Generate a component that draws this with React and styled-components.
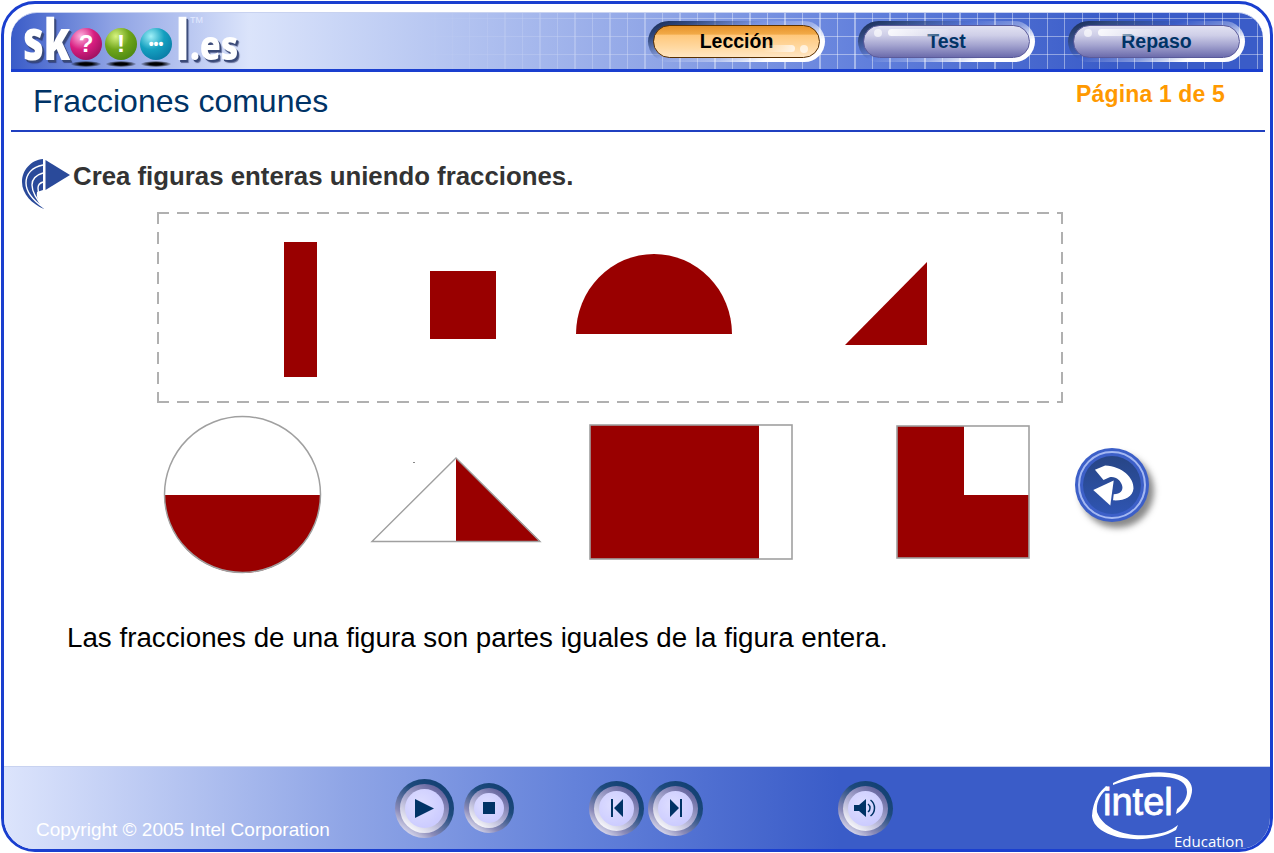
import React from 'react';
import styled, { createGlobalStyle } from 'styled-components';

const GlobalStyle = createGlobalStyle`
  html, body {
    margin: 0;
    padding: 0;
    background: #fff;
    font-family: 'Liberation Sans', Arial, sans-serif;
  }
`;

const Frame = styled.div`
  box-sizing: border-box;
  width: 1272px;
  height: 851px;
  margin: 1px;
  border: 3px solid #1a3fcf;
  border-radius: 34px;
  background: #fff;
  overflow: hidden;
  display: flex;
  flex-direction: column;
`;

const Header = styled.header`
  position: relative;
  flex: none;
  box-sizing: border-box;
  height: 60px;
  margin: 8px 7px 0 7px;
  border-top: 1px solid #c8d2f0;
  border-bottom: 3px solid #1a3fcf;
  border-radius: 26px 26px 0 0;
  background: linear-gradient(90deg, #3a5cc8 0%, #8ea2e4 8%, #dbe4fb 19%, #c0cef4 30%, #8ea4e6 52%, #6280dc 68%, #3a5cc8 88%, #3a5cc8 100%);
  display: flex;
  align-items: flex-start;

  &::before {
    content: '';
    position: absolute;
    left: 406px;
    right: 0;
    top: 0;
    bottom: 0;
    border-top-right-radius: 26px;
    background-image:
      repeating-linear-gradient(90deg, rgba(255, 255, 255, 0.42) 0 1px, transparent 1px 17.5px),
      repeating-linear-gradient(180deg, transparent 0 5px, rgba(255, 255, 255, 0.42) 5px 6px, transparent 6px 18px);
    mask-image: linear-gradient(90deg, transparent 0%, #000 40%);
  }
`;

const Logo = styled.div`
  position: relative;
  display: flex;
  align-items: flex-start;
  margin: 5px 0 0 12px;
  height: 52px;
`;

const LogoWord = styled.span`
  flex: none;
  display: block;
  width: ${(p) => p.$width}px;
  margin: ${(p) => p.$margin || '0'};
  font-family: 'Open Sans', 'Liberation Sans', sans-serif;
  font-weight: 800;
  font-size: ${(p) => p.$size}px;
  line-height: ${(p) => p.$line}px;
  color: #fff;
  transform: scaleX(${(p) => p.$squeeze});
  transform-origin: left center;
  text-shadow: 2px 2px 0 #3a4a78, 3px 3px 1px rgba(30, 40, 90, 0.6);
`;

const Ball = styled.span`
  position: relative;
  flex: none;
  width: 32px;
  height: 32px;
  margin: 10px 3px 0 0;
  border-radius: 50%;
  background: radial-gradient(circle at 34% 26%, ${(p) => p.$light} 0%, ${(p) => p.$mid} 42%, ${(p) => p.$dark} 78%, ${(p) => p.$rim} 100%);
  color: #fff;
  font: bold ${(p) => p.$font}px/32px 'Liberation Sans', sans-serif;
  text-align: center;

  &::after {
    content: '';
    position: absolute;
    left: 1px;
    right: 1px;
    top: 33px;
    height: 6px;
    border-radius: 50%;
    background: radial-gradient(ellipse, #000 30%, rgba(0, 0, 0, 0) 75%);
  }
`;

const Trademark = styled.span`
  position: absolute;
  left: 167px;
  top: -3px;
  font-size: 9px;
  color: #e4eaff;
`;

const Nav = styled.nav`
  position: relative;
  display: flex;
  margin: 8px 18px 0 auto;
  gap: 33px;
`;

const TabRing = styled.div`
  box-sizing: border-box;
  width: 177px;
  height: 41px;
  padding: 4px 5px;
  border-radius: 21px;
  background: linear-gradient(160deg, #14264f 0%, #31497f 16%, rgba(90, 120, 200, 0) 40%, rgba(255, 255, 255, 0.35) 60%, #fff 78%);
`;

const Tab = styled.button`
  position: relative;
  display: block;
  box-sizing: border-box;
  width: 100%;
  height: 33px;
  padding: 0 0 2px;
  border: 1px solid ${(p) => (p.$active ? '#5a3000' : '#5a5a9a')};
  border-radius: 17px;
  overflow: hidden;
  font: bold 19.5px/28px 'Liberation Sans', sans-serif;
  color: ${(p) => (p.$active ? '#000' : '#003366')};
  background: ${(p) =>
    p.$active
      ? 'linear-gradient(180deg, #e6922a 0%, #f2aa48 26%, #ffc87c 30%, #ffd9a2 70%, #ffe6c4 100%)'
      : 'linear-gradient(180deg, #e2e2f2 0%, #cfcfe8 30%, #a4a4d0 62%, #6c6cac 100%)'};

  &::before {
    content: '';
    position: absolute;
    width: 8px;
    height: 8px;
    border-radius: 50%;
    background: rgba(255, 255, 255, 0.65);
    ${(p) => (p.$active ? 'right: 11px; bottom: 4px;' : 'left: 10px; top: 3px;')}
  }

  &::after {
    content: '';
    position: absolute;
    height: 7px;
    border-radius: 4px;
    ${(p) =>
      p.$active
        ? 'right: 24px; bottom: 5px; width: 32px; background: linear-gradient(90deg, rgba(255,255,255,0), rgba(255,255,255,.75));'
        : 'left: 24px; top: 3px; width: 62px; background: linear-gradient(90deg, rgba(255,255,255,.85), rgba(255,255,255,.1));'}
  }
`;

const TitleRow = styled.div`
  flex: none;
  box-sizing: border-box;
  height: 60px;
  margin: 0 5px 0 7px;
  padding: 0 40px 0 22px;
  border-bottom: 2px solid #2040c0;
  display: flex;
  justify-content: space-between;
  align-items: flex-start;
`;

const Title = styled.h1`
  margin: 9px 0 0;
  font-size: 32px;
  line-height: 40px;
  font-weight: 400;
  color: #003366;
`;

const PageCount = styled.div`
  margin-top: 7px;
  font-size: 23px;
  line-height: 30px;
  letter-spacing: 0.15px;
  font-weight: 700;
  color: #ff9900;
`;

const Main = styled.main`
  flex: 1;
  display: flex;
  flex-direction: column;
`;

const Prompt = styled.div`
  display: flex;
  align-items: flex-start;
  gap: 1px;
  height: 52px;
  margin: 26px 0 0 18px;
`;

const PromptText = styled.h2`
  margin: 3px 0 0;
  font-size: 25.8px;
  line-height: 30px;
  font-weight: 700;
  color: #333;
`;

const Tray = styled.div`
  box-sizing: border-box;
  display: flex;
  align-items: flex-start;
  width: 906px;
  height: 191px;
  margin: 2px 0 0 153px;
  border: 2px solid transparent;
  background:
    repeating-linear-gradient(90deg, #b0b0b0 0 12px, transparent 12px 20px) top left / 100% 2px no-repeat border-box,
    repeating-linear-gradient(90deg, #b0b0b0 0 12px, transparent 12px 20px) bottom left / 100% 2px no-repeat border-box,
    repeating-linear-gradient(180deg, #b0b0b0 0 12px, transparent 12px 20px) top left / 2px 100% no-repeat border-box,
    repeating-linear-gradient(180deg, #b0b0b0 0 12px, transparent 12px 20px) top right / 2px 100% no-repeat border-box;
`;

const Targets = styled.div`
  display: flex;
  align-items: flex-start;
  margin-left: 159px;
`;

const Piece = styled.svg`
  flex: none;
  display: block;
  margin: ${(p) => p.$top}px 0 0 ${(p) => p.$left}px;
`;

const ReturnButton = styled.div`
  flex: none;
  margin: 45px 0 0 45px;
  width: 74px;
  height: 74px;
  border-radius: 50%;
  box-shadow: 5px 6px 6px rgba(40, 40, 40, 0.55);
  background: #3c5fc8;
  box-sizing: border-box;
  padding: 3px;
`;

const ReturnRing = styled.div`
  box-sizing: border-box;
  width: 100%;
  height: 100%;
  border-radius: 50%;
  border: 2px solid #a4b8f2;
  padding: 3px;
  background: #3c5fc8;
`;

const ReturnFace = styled.div`
  width: 100%;
  height: 100%;
  border-radius: 50%;
  background: linear-gradient(180deg, #274585, #2f55b2);

  svg {
    display: block;
  }
`;

const Explanation = styled.p`
  margin: 49px 0 0 63px;
  font-size: 27.75px;
  line-height: 30px;
  color: #000;
`;

const Footer = styled.footer`
  flex: none;
  height: 83px;
  box-sizing: border-box;
  border-top: 1px solid #c8d2f0;
  background: linear-gradient(90deg, #dce4fc 0%, #8fa5e6 27%, #6482da 45%, #3a5cc8 66%, #3a5cc8 100%);
  display: flex;
  align-items: center;
`;

const Copyright = styled.div`
  align-self: flex-end;
  width: 293px;
  margin: 0 0 7px 32px;
  font-size: 19px;
  line-height: 24px;
  color: #fff;
  white-space: nowrap;
`;

const Media = styled.div`
  flex: none;
  box-sizing: border-box;
  width: ${(p) => p.$size}px;
  height: ${(p) => p.$size}px;
  margin-left: ${(p) => p.$left}px;
  padding: 5px;
  border-radius: 50%;
  background: linear-gradient(35deg, #f0f0fc 8%, #8a8ab8 30%, #1d4a7c 62%, #0d3b6e 100%);
`;

const MediaRim = styled.div`
  box-sizing: border-box;
  width: 100%;
  height: 100%;
  padding: 5px;
  border-radius: 50%;
  background: linear-gradient(215deg, #5c5c98 10%, #b0b0d4 55%, #fff 90%);
`;

const MediaFace = styled.div`
  width: 100%;
  height: 100%;
  border-radius: 50%;
  background: radial-gradient(circle at 40% 40%, #dedeff, #ccccff 70%);
  display: flex;
  align-items: center;
  justify-content: center;
`;

const Intel = styled.div`
  position: relative;
  flex: none;
  align-self: flex-start;
  width: 152px;
  height: 79px;
  margin: 4px 27px 0 auto;
`;

const IntelWord = styled.div`
  position: absolute;
  left: 12px;
  top: 11px;
  font-size: 38px;
  line-height: 40px;
  color: #fff;
  -webkit-text-stroke: 0.8px #fff;
`;

const IntelSwoosh = styled.svg`
  position: absolute;
  left: 0;
  top: 0;
`;

const IntelTag = styled.div`
  position: absolute;
  left: 83px;
  bottom: 0;
  font-family: 'Open Sans', sans-serif;
  font-size: 15px;
  line-height: 18px;
  color: #fff;
`;

function MediaButton({ size, left, children }) {
  return (
    <Media $size={size} $left={left}>
      <MediaRim>
        <MediaFace>{children}</MediaFace>
      </MediaRim>
    </Media>
  );
}

const RED = '#990000';
const EDGE = '#a0a0a0';

export default function App() {
  return (
    <>
      <GlobalStyle />
      <Frame>
        <Header>
          <Logo>
            <LogoWord $size={56} $line={48} $width={47} $squeeze={0.72} $margin="-4px 0 0 0">sk</LogoWord>
            <Ball $font={24} $light="#ffb4e0" $mid="#d81e80" $dark="#a01262" $rim="#ff40a8">?</Ball>
            <Ball $font={24} $light="#d8f480" $mid="#6fa51a" $dark="#4f8a12" $rim="#a8e020">!</Ball>
            <Ball $font={14} $light="#a0f0f8" $mid="#14a0c0" $dark="#0a7ea8" $rim="#20e0f0">•••</Ball>
            <LogoWord $size={56} $line={48} $width={14} $squeeze={0.72} $margin="-4px 0 0 1px">l</LogoWord>
            <LogoWord $size={41} $line={26} $width={48} $squeeze={0.83} $margin="13px 0 0 0">.es</LogoWord>
            <Trademark>TM</Trademark>
          </Logo>
          <Nav>
            <TabRing><Tab $active>Lección</Tab></TabRing>
            <TabRing><Tab>Test</Tab></TabRing>
            <TabRing><Tab>Repaso</Tab></TabRing>
          </Nav>
        </Header>

        <TitleRow>
          <Title>Fracciones comunes</Title>
          <PageCount>Página 1 de 5</PageCount>
        </TitleRow>

        <Main>
          <Prompt>
            <svg width="50" height="52" viewBox="0 0 50 52">
              <path d="M21 1C9 2 0 12 0 24c0 12 10 22 22 27-5-7-8-11-7-17l6-2z" fill="#2a4a9a" />
              <path d="M21 7C10 9 4 16 4 25c0 10 8 18 18 25M21 15c-7 2-11 6-11 12 0 8 5 15 12 23M21 24c-3 1-5 3-5 6 0 6 2 11 6 19" fill="none" stroke="#fff" strokeWidth="1.4" />
              <path d="M23.5 2L48 17 23.5 32z" fill="#2a4a9a" />
            </svg>
            <PromptText>Crea figuras enteras uniendo fracciones.</PromptText>
          </Prompt>

          <Tray>
            <Piece $left={125} $top={28} width="33" height="135" viewBox="0 0 33 135">
              <rect width="33" height="135" fill={RED} />
            </Piece>
            <Piece $left={113} $top={57} width="66" height="68" viewBox="0 0 66 68">
              <rect width="66" height="68" fill={RED} />
            </Piece>
            <Piece $left={80} $top={40} width="156" height="80" viewBox="0 0 156 80">
              <path d="M0 80A78 80 0 0 1 156 80z" fill={RED} />
            </Piece>
            <Piece $left={113} $top={48} width="82" height="83" viewBox="0 0 82 83">
              <path d="M82 0V83H0z" fill={RED} />
            </Piece>
          </Tray>

          <Targets>
            <Piece $left={0} $top={12} width="159" height="159" viewBox="0 0 159 159">
              <path d="M1.5 80h156a78 78 0 0 1-156 0z" fill={RED} />
              <circle cx="79.5" cy="79.5" r="78" fill="none" stroke={EDGE} strokeWidth="1.5" />
            </Piece>
            <Piece $left={48} $top={53} width="172" height="88" viewBox="0 0 172 88">
              <path d="M86 2V85H170z" fill={RED} />
              <path d="M2 85.5L86 2 170 85.5z" fill="none" stroke={EDGE} strokeWidth="1.4" />
              <rect x="43" y="6" width="2" height="1" fill="#888" />
            </Piece>
            <Piece $left={47} $top={21} width="204" height="136" viewBox="0 0 204 136">
              <rect x="1" y="1" width="169" height="134" fill={RED} />
              <rect x="1" y="1" width="202" height="134" fill="none" stroke={EDGE} strokeWidth="1.6" />
            </Piece>
            <Piece $left={103} $top={22} width="134" height="134" viewBox="0 0 134 134">
              <path d="M1 1H68V70H133V133H1z" fill={RED} />
              <rect x="1" y="1" width="132" height="132" fill="none" stroke={EDGE} strokeWidth="1.6" />
            </Piece>
            <ReturnButton>
              <ReturnRing>
                <ReturnFace>
                  <svg width="58" height="58" viewBox="70 60 170 170">
                    <path d="M105 100L135 88C185 90 220 125 218 155 216 180 190 192 158 190L160 172C180 172 188 160 185 148 182 132 165 118 148 122L130 130z" fill="#fff" />
                    <path d="M100 160L160 132 150 205z" fill="#fff" />
                  </svg>
                </ReturnFace>
              </ReturnRing>
            </ReturnButton>
          </Targets>

          <Explanation>Las fracciones de una figura son partes iguales de la figura entera.</Explanation>
        </Main>

        <Footer>
          <Copyright>Copyright © 2005 Intel Corporation</Copyright>
          <MediaButton size={59} left={66}>
            <svg width="19" height="19" viewBox="0 0 20 20"><path d="M0 0L20 10 0 20z" fill="#003366" /></svg>
          </MediaButton>
          <MediaButton size={50} left={10}>
            <svg width="12" height="12" viewBox="0 0 12 12"><rect width="12" height="12" fill="#003366" /></svg>
          </MediaButton>
          <MediaButton size={55} left={75}>
            <svg width="12" height="18" viewBox="0 0 12 18"><path d="M0 0H2V18H0zM12 0V18L3 9z" fill="#003366" /></svg>
          </MediaButton>
          <MediaButton size={55} left={4}>
            <svg width="12" height="18" viewBox="0 0 12 18"><path d="M12 0H10V18H12zM0 0V18L9 9z" fill="#003366" /></svg>
          </MediaButton>
          <MediaButton size={55} left={135}>
            <svg width="24" height="20" viewBox="0 0 24 20">
              <path d="M0 7H5L12 1V19L5 13H0z" fill="#003366" />
              <path d="M14 6a5 5 0 0 1 0 8M16.5 2a10 10 0 0 1 0 16" fill="none" stroke="#003366" strokeWidth="1.5" />
            </svg>
          </MediaButton>
          <Intel>
            <IntelSwoosh width="110" height="70" viewBox="0 0 110 70">
              <path d="M1 45C2 30 8 20 16 15L15 19C8 25 5 33 6 41 12 58 35 66 58 64 70 63 80 60 87 54L85 59C72 67 50 70 32 67 14 64 2 56 1 45z" fill="#fff" />
              <path d="M22 12C40 2 70-2 88 4 100 8 103 16 100 25 98 33 92 39 85 43L86 38C92 33 96 27 96 21 96 12 88 7 74 6 58 5 40 7 22 14z" fill="#fff" />
            </IntelSwoosh>
            <IntelWord>intel</IntelWord>
            <IntelTag>Education</IntelTag>
          </Intel>
        </Footer>
      </Frame>
    </>
  );
}
